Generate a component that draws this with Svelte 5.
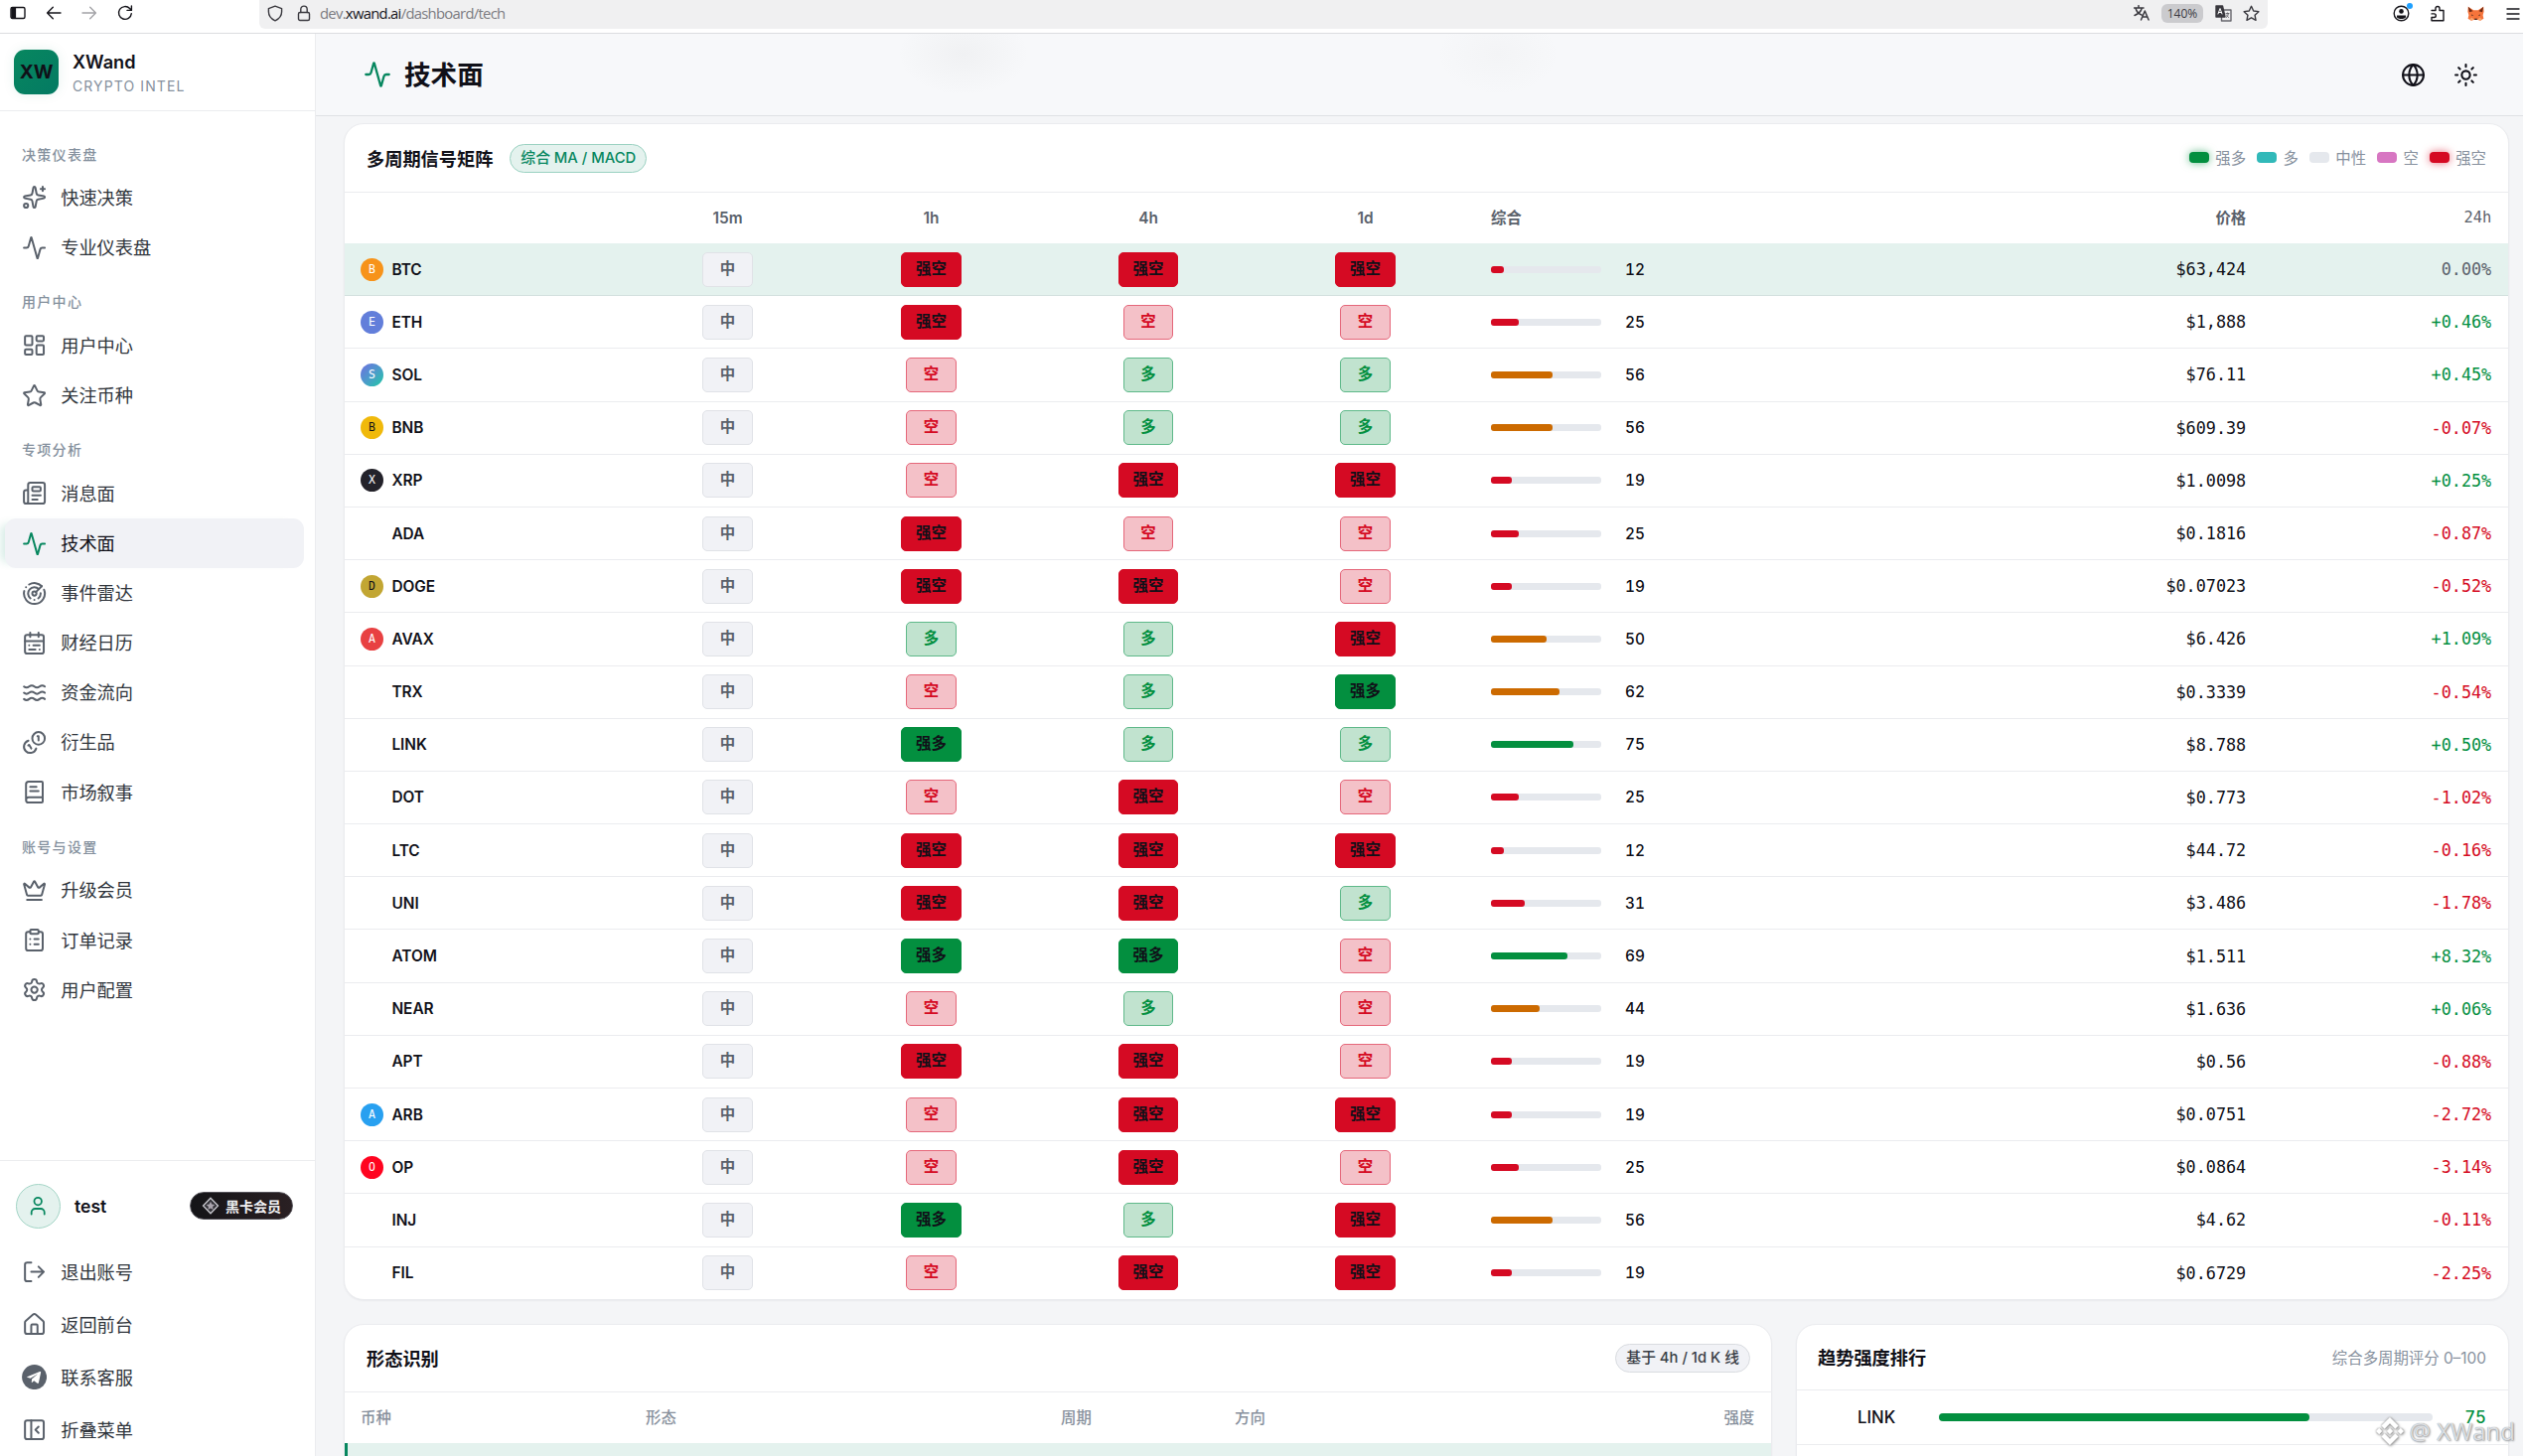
<script>
  // 24x24 stroke icons, drawn with currentColor
  const icons = {
    sparkles: '<path d="M11.017 2.814a1 1 0 0 1 1.966 0l1.051 5.558a2 2 0 0 0 1.594 1.594l5.558 1.051a1 1 0 0 1 0 1.966l-5.558 1.051a2 2 0 0 0-1.594 1.594l-1.051 5.558a1 1 0 0 1-1.966 0l-1.051-5.558a2 2 0 0 0-1.594-1.594l-5.558-1.051a1 1 0 0 1 0-1.966l5.558-1.051a2 2 0 0 0 1.594-1.594z"/><path d="M20 2v4M22 4h-4"/><circle cx="4" cy="20" r="2"/>',
    activity: '<path d="M22 12h-2.48a2 2 0 0 0-1.93 1.46l-2.35 8.36a.25.25 0 0 1-.48 0L9.24 2.18a.25.25 0 0 0-.48 0l-2.35 8.36A2 2 0 0 1 4.49 12H2"/>',
    dashboard: '<rect width="7" height="9" x="3" y="3" rx="1"/><rect width="7" height="5" x="14" y="3" rx="1"/><rect width="7" height="9" x="14" y="12" rx="1"/><rect width="7" height="5" x="3" y="16" rx="1"/>',
    star: '<path d="M11.525 2.295a.53.53 0 0 1 .95 0l2.31 4.679a2.123 2.123 0 0 0 1.595 1.16l5.166.756a.53.53 0 0 1 .294.904l-3.736 3.638a2.123 2.123 0 0 0-.611 1.878l.882 5.14a.53.53 0 0 1-.771.56l-4.618-2.428a2.122 2.122 0 0 0-1.973 0L6.396 21.01a.53.53 0 0 1-.77-.56l.881-5.139a2.122 2.122 0 0 0-.611-1.879L2.16 9.795a.53.53 0 0 1 .294-.906l5.165-.755a2.122 2.122 0 0 0 1.597-1.16z"/>',
    newspaper: '<path d="M15 18h-5M18 14h-8M4 22h16a2 2 0 0 0 2-2V4a2 2 0 0 0-2-2H8a2 2 0 0 0-2 2v16a2 2 0 0 1-4 0v-9a2 2 0 0 1 2-2h2"/><rect width="8" height="4" x="10" y="6" rx="1"/>',
    radar: '<path d="M19.07 4.93A10 10 0 0 0 6.99 3.34M4 6h.01M2.29 9.62A10 10 0 1 0 21.31 8.35M16.24 7.76A6 6 0 1 0 8.23 16.67M12 18h.01M17.99 11.66A6 6 0 0 1 15.77 16.67"/><circle cx="12" cy="12" r="2"/><path d="m13.41 10.59 5.66-5.66"/>',
    calendar: '<rect width="18" height="18" x="3" y="4" rx="2"/><path d="M16 2v4M3 10h18M8 2v4M17 14h-6M13 18H7M7 14h.01M17 18h.01"/>',
    waves: '<path d="M2 6c.6.5 1.2 1 2.5 1C7 7 7 5 9.5 5c2.6 0 2.4 2 5 2 2.5 0 2.5-2 5-2 1.3 0 1.9.5 2.5 1M2 12c.6.5 1.2 1 2.5 1 2.5 0 2.5-2 5-2 2.6 0 2.4 2 5 2 2.5 0 2.5-2 5-2 1.3 0 1.9.5 2.5 1M2 18c.6.5 1.2 1 2.5 1 2.5 0 2.5-2 5-2 2.6 0 2.4 2 5 2 2.5 0 2.5-2 5-2 1.3 0 1.9.5 2.5 1"/>',
    coins: '<path d="M13.744 17.736a6 6 0 1 1-7.48-7.48M15 6h1v4M6.134 14.768l.866-.5 2 3.464"/><circle cx="16" cy="8" r="6"/>',
    book: '<path d="M4 19.5v-15A2.5 2.5 0 0 1 6.5 2H19a1 1 0 0 1 1 1v18a1 1 0 0 1-1 1H6.5a1 1 0 0 1 0-5H20M8 11h8M8 7h6"/>',
    crown: '<path d="M11.562 3.266a.5.5 0 0 1 .876 0L15.39 8.87a1 1 0 0 0 1.516.294L21.183 5.5a.5.5 0 0 1 .798.519l-2.834 10.246a1 1 0 0 1-.956.734H5.81a1 1 0 0 1-.957-.734L2.02 6.02a.5.5 0 0 1 .798-.519l4.276 3.664a1 1 0 0 0 1.516-.294zM5 21h14"/>',
    clipboard: '<rect width="8" height="4" x="8" y="2" rx="1"/><path d="M16 4h2a2 2 0 0 1 2 2v14a2 2 0 0 1-2 2H6a2 2 0 0 1-2-2V6a2 2 0 0 1 2-2h2M12 11h4M12 16h4M8 11h.01M8 16h.01"/>',
    settings: '<path d="M9.671 4.136a2.34 2.34 0 0 1 4.659 0 2.34 2.34 0 0 0 3.319 1.915 2.34 2.34 0 0 1 2.33 4.033 2.34 2.34 0 0 0 0 3.831 2.34 2.34 0 0 1-2.33 4.033 2.34 2.34 0 0 0-3.319 1.915 2.34 2.34 0 0 1-4.659 0 2.34 2.34 0 0 0-3.32-1.915 2.34 2.34 0 0 1-2.33-4.033 2.34 2.34 0 0 0 0-3.831A2.34 2.34 0 0 1 6.35 6.051a2.34 2.34 0 0 0 3.319-1.915"/><circle cx="12" cy="12" r="3"/>',
    logout: '<path d="m16 17 5-5-5-5M21 12H9M9 21H5a2 2 0 0 1-2-2V5a2 2 0 0 1 2-2h4"/>',
    house: '<path d="M15 21v-8a1 1 0 0 0-1-1h-4a1 1 0 0 0-1 1v8"/><path d="M3 10a2 2 0 0 1 .709-1.528l7-6a2 2 0 0 1 2.582 0l7 6A2 2 0 0 1 21 10v9a2 2 0 0 1-2 2H5a2 2 0 0 1-2-2z"/>',
    telegram: '<circle cx="12" cy="12" r="11.9" fill="currentColor" stroke="none"/><path d="M4.6 11.8 17.2 6.7c.7-.3 1.2.1 1 1l-2.1 9.6c-.2.8-.7.9-1.3.6l-3.2-2.4-1.6 1.5c-.4.3-.7.2-.7-.4l.3-2.7 5.8-5.2-7.2 4.5-3.1-1c-.7-.2-.7-.6-.5-.4z" fill="#fff" stroke="none"/>',
    panel: '<rect width="18" height="18" x="3" y="3" rx="2"/><path d="M9 3v18M16 15l-3-3 3-3"/>',
    user: '<path d="M19 21v-2a4 4 0 0 0-4-4H9a4 4 0 0 0-4 4v2"/><circle cx="12" cy="7" r="4"/>',
    globe: '<circle cx="12" cy="12" r="10"/><path d="M12 2a14.5 14.5 0 0 0 0 20 14.5 14.5 0 0 0 0-20M2 12h20"/>',
    sun: '<circle cx="12" cy="12" r="4"/><path d="M12 2v2M12 20v2m-7.07-17.07 1.41 1.41m11.32 11.32 1.41 1.41M2 12h2M20 12h2M6.34 17.66l-1.41 1.41M19.07 4.93l-1.41 1.41"/>',
  };

  const menu = [
    { title: '决策仪表盘', items: [['sparkles', '快速决策'], ['activity', '专业仪表盘']] },
    { title: '用户中心', items: [['dashboard', '用户中心'], ['star', '关注币种']] },
    {
      title: '专项分析',
      items: [
        ['newspaper', '消息面'],
        ['activity', '技术面'],
        ['radar', '事件雷达'],
        ['calendar', '财经日历'],
        ['waves', '资金流向'],
        ['coins', '衍生品'],
        ['book', '市场叙事'],
      ],
    },
    { title: '账号与设置', items: [['crown', '升级会员'], ['clipboard', '订单记录'], ['settings', '用户配置']] },
  ];

  const footer = [
    ['logout', '退出账号'],
    ['house', '返回前台'],
    ['telegram', '联系客服'],
    ['panel', '折叠菜单'],
  ];

  const active = '技术面';

  const legend = [
    ['strong-long', '强多'],
    ['long', '多'],
    ['neutral', '中性'],
    ['short', '空'],
    ['strong-short', '强空'],
  ];

  const signalClass = { 中: 'n', 强空: 'ss', 空: 's', 多: 'l', 强多: 'sl' };

  // symbol, 1h, 4h, 1d, score, price, change
  const rows = [
    ['BTC', '强空', '强空', '强空', 12, '$63,424', '0.00%'],
    ['ETH', '强空', '空', '空', 25, '$1,888', '+0.46%'],
    ['SOL', '空', '多', '多', 56, '$76.11', '+0.45%'],
    ['BNB', '空', '多', '多', 56, '$609.39', '-0.07%'],
    ['XRP', '空', '强空', '强空', 19, '$1.0098', '+0.25%'],
    ['ADA', '强空', '空', '空', 25, '$0.1816', '-0.87%'],
    ['DOGE', '强空', '强空', '空', 19, '$0.07023', '-0.52%'],
    ['AVAX', '多', '多', '强空', 50, '$6.426', '+1.09%'],
    ['TRX', '空', '多', '强多', 62, '$0.3339', '-0.54%'],
    ['LINK', '强多', '多', '多', 75, '$8.788', '+0.50%'],
    ['DOT', '空', '强空', '空', 25, '$0.773', '-1.02%'],
    ['LTC', '强空', '强空', '强空', 12, '$44.72', '-0.16%'],
    ['UNI', '强空', '强空', '多', 31, '$3.486', '-1.78%'],
    ['ATOM', '强多', '强多', '空', 69, '$1.511', '+8.32%'],
    ['NEAR', '空', '多', '空', 44, '$1.636', '+0.06%'],
    ['APT', '强空', '强空', '空', 19, '$0.56', '-0.88%'],
    ['ARB', '空', '强空', '强空', 19, '$0.0751', '-2.72%'],
    ['OP', '空', '强空', '空', 25, '$0.0864', '-3.14%'],
    ['INJ', '强多', '多', '强空', 56, '$4.62', '-0.11%'],
    ['FIL', '空', '强空', '强空', 19, '$0.6729', '-2.25%'],
  ];

  const coins = ['BTC', 'ETH', 'SOL', 'BNB', 'XRP', 'DOGE', 'AVAX', 'ARB', 'OP'];

  function scoreClass(score) {
    if (score >= 65) return 'high';
    return score >= 40 ? 'mid' : 'low';
  }

  function changeClass(change) {
    if (change[0] === '+') return 'up';
    return change[0] === '-' ? 'down' : 'flat';
  }
</script>

{#snippet icon(name)}
  <svg class="icon" viewBox="0 0 24 24">{@html icons[name]}</svg>
{/snippet}

<div class="window">
  <div class="browser">
    <div class="nav-buttons">
      <svg width="16" height="16" viewBox="0 0 16 16"><rect x="1" y="2.5" width="14" height="11" rx="1.5" /><path d="M2 3h3.4v10H2z" fill="#15141a" /></svg>
      <svg width="16" height="16" viewBox="0 0 16 16"><path d="M15 8H1.8M7.3 2.3 1.6 8l5.7 5.7" /></svg>
      <svg class="dim" width="16" height="16" viewBox="0 0 16 16"><path d="M1 8h13.2M8.7 2.3 14.4 8l-5.7 5.7" /></svg>
      <svg width="16" height="16" viewBox="0 0 16 16"><path d="M14.3 8.6A6.4 6.4 0 1 1 12.6 3.6l1.6 1.6M14.4 1v4.4H10" /></svg>
    </div>
    <div class="address">
      <svg width="16" height="17" viewBox="0 0 16 17"><path d="M8 1.2 14.6 3.6v3.2c0 4.3-2.7 7.3-6.6 9-3.9-1.7-6.6-4.7-6.6-9V3.6z" /></svg>
      <svg class="lock" width="14" height="17" viewBox="0 0 14 17"><rect x="1.5" y="7.5" width="11" height="8" rx="1.5" /><path d="M3.8 7.5V4.3a3.2 3.2 0 0 1 6.4 0v3.2" /></svg>
      <span class="url">dev.<b>xwand.ai</b>/dashboard/tech</span>
      <svg width="16" height="16" viewBox="0 0 16 16"><path d="M.5 3H10M5 .7V3M2 3c.8 3.6 3.4 6 6 7M8.3 3C7.5 6.6 4.5 9 1 10.5M7.5 15l3.800-9 3.800 9M8.800 12h5" stroke-width="1.5" /></svg>
      <span class="zoom">140%</span>
      <svg width="17" height="17" viewBox="0 0 17 17"><path d="M9 5h7v11H6.5v-4" stroke="#66656c" /><path d="M1 1h6.5L10 12H1z" fill="#3a393f" stroke="#3a393f" /><path d="m3 9 2-5.5L7 9M3.6 7.5h2.8" stroke="#fff" stroke-width="1" /><path d="M11 8.500h3M12.500 8v1M13.500 8.500c-.3 2-1 3-2.200 4M11.500 10c.5 1.300 1.300 2 2.200 2.500" stroke="#66656c" stroke-width=".9" /></svg>
      <svg width="17" height="17" viewBox="0 0 24 24"><path d="m12 1.800 3.100 6.700 7.300.9-5.400 5 1.400 7.300L12 18.100l-6.400 3.600L7 14.400l-5.400-5 7.300-.9z" stroke-width="2" /></svg>
    </div>
    <div class="tools">
      <span class="account">
        <svg width="17" height="17" viewBox="0 0 17 17"><circle cx="8.5" cy="8.5" r="7.3" /><circle cx="8.5" cy="6.4" r="2.3" fill="#15141a" stroke="none" /><path d="M4 12.500v-2h9v2c-2.500 2-6.500 2-9 0z" fill="#15141a" stroke="none" /></svg>
        <i></i>
      </span>
      <svg width="16" height="17" viewBox="0 0 16 17"><path d="M2 5.500h4V3.500a2 2 0 0 1 4 0v2h4v10.300H2v-3.300h2.500a1.800 1.800 0 0 0 0-3.600H2" /></svg>
      <svg width="17" height="16" viewBox="0 0 17 16"><path d="m.8.8 5.500 3.400h4.400L16.200.8l.4 5-1 3.400.8 3.500-3.200 2-2.600-.7h-4.200l-2.600.7-3.200-2 .8-3.500-1-3.400z" fill="#f5743b" stroke="none" /><path d="m.8.8 4.700 4.500L2 6.300zM16.200.8l-4.700 4.500 3.500 1z" fill="#6b2a14" stroke="none" /><path d="m4.200 8.400 2 1-1.900.4zM12.800 8.400l-2 1 1.900.4zM7 12.800h3l-.5 1.200h-2z" fill="#33221d" stroke="none" /><path d="m2 13.500 2.600-2 2 2.300-2.400.6zM15 13.500l-2.600-2-2 2.300 2.400.6z" fill="#f9a36b" stroke="none" /></svg>
      <svg class="burger" width="14" height="14" viewBox="0 0 14 14"><path d="M1 2h12M1 7h12M1 12h12" /></svg>
    </div>
  </div>

  <div class="app">
    <aside>
      <div class="brand">
        <div class="logo">XW</div>
        <div class="brand-text">
          <div class="name">XWand</div>
          <div class="tag">CRYPTO INTEL</div>
        </div>
      </div>
      <nav>
        {#each menu as group}
          <h4>{group.title}</h4>
          {#each group.items as [name, label]}
            <a class:active={label === active}>{@render icon(name)}{label}</a>
          {/each}
        {/each}
      </nav>
      <div class="side-foot">
        <div class="user">
          <span class="avatar">{@render icon('user')}</span>
          <span class="username">test</span>
          <span class="member">
            <svg width="18" height="18" viewBox="0 0 18 18"><path d="M9 1.300 16.500 9 9 16.700 1.500 9z" fill="#35343a" stroke="#c9c9cf" stroke-width="1.300" /><path d="m9 4.800 1.300 2.800 3 .4-2.200 2.100.5 3L9 11.600l-2.600 1.500.5-3L4.700 8l3-.4z" fill="#aaa4ad" /></svg>
            黑卡会员
          </span>
        </div>
        {#each footer as [name, label]}
          <a>{@render icon(name)}{label}</a>
        {/each}
      </div>
    </aside>

    <main>
      <header>
        {@render icon('activity')}
        <h1>技术面</h1>
        <div class="actions">
          {@render icon('globe')}
          {@render icon('sun')}
        </div>
      </header>

      <section class="card matrix">
        <div class="card-head">
          <h2>多周期信号矩阵</h2>
          <span class="pill green">综合 MA / MACD</span>
          <div class="legend">
            {#each legend as [kind, label]}
              <span><i class={kind}></i>{label}</span>
            {/each}
          </div>
        </div>
        <div class="row thead">
          <div></div>
          <div class="center">15m</div>
          <div class="center">1h</div>
          <div class="center">4h</div>
          <div class="center">1d</div>
          <div class="score cjk">综合</div>
          <div class="right cjk">价格</div>
          <div class="right mono">24h</div>
        </div>
        {#each rows as [symbol, h1, h4, d1, score, price, change], i}
          <div class="row" class:selected={i === 0}>
            <div class="symbol">
              <span class="coin {symbol.toLowerCase()}">{coins.includes(symbol) ? symbol[0] : ''}</span>
              {symbol}
            </div>
            {#each ['中', h1, h4, d1] as signal}
              <div class="center"><span class="signal {signalClass[signal]}">{signal}</span></div>
            {/each}
            <div class="score">
              <span class="track"><i class={scoreClass(score)} style="width: {score}%"></i></span>
              {score}
            </div>
            <div class="right mono">{price}</div>
            <div class="right mono {changeClass(change)}">{change}</div>
          </div>
        {/each}
      </section>

      <div class="bottom">
        <section class="card">
          <div class="card-head">
            <h2>形态识别</h2>
            <span class="pill grey">基于 4h / 1d K 线</span>
          </div>
          <div class="pattern-head">
            <div>币种</div>
            <div>形态</div>
            <div>周期</div>
            <div>方向</div>
            <div>强度</div>
          </div>
          <div class="pattern-row"></div>
        </section>
        <section class="card rank">
          <div class="card-head">
            <h2>趋势强度排行</h2>
            <span class="hint">综合多周期评分 0–100</span>
          </div>
          <div class="rank-row">
            <span class="rank-name">LINK</span>
            <span class="rank-track"><i style="width: 75%"></i></span>
            <b>75</b>
          </div>
        </section>
      </div>
    </main>
  </div>

  <div class="watermark">
    <svg width="28" height="28" viewBox="0 0 24 24"><path d="M16.624 13.92l2.7175 2.7154-7.353 7.353-7.353-7.352 2.7175-2.7164 4.6355 4.6595 4.6356-4.6595zm4.6366-4.6366L24 12l-2.7154 2.7164L18.5682 12l2.6924-2.7164zm-9.272.001l2.7163 2.6914-2.7164 2.7174L9.2721 12l2.7164-2.7154zm-9.2722-.001L5.4088 12l-2.6914 2.6924L0 12l2.7164-2.7164zM11.9885.0115l7.353 7.329-2.7174 2.7154-4.6356-4.6356-4.6355 4.6595-2.7174-2.7154 7.353-7.353z" /></svg>
    @ XWand
  </div>
</div>

<style>
  :global(body) {
    overflow: hidden;
  }

  .window {
    position: relative;
    display: flex;
    flex-direction: column;
    width: 2540px;
    height: 1466px;
    overflow: hidden;
    background: #f4f5f7;
    color: #101018;
    font-family: Inter, 'Noto Sans CJK SC', sans-serif;
    font-size: 15.4px;
  }

  .window * {
    box-sizing: border-box;
  }

  h1,
  h2,
  h4 {
    margin: 0;
  }

  .icon {
    flex: none;
    width: 25.2px;
    height: 25.2px;
    fill: none;
    stroke: currentColor;
    stroke-width: 1.9;
    stroke-linecap: round;
    stroke-linejoin: round;
  }

  /* browser toolbar */
  .browser {
    flex: none;
    display: flex;
    align-items: flex-start;
    height: 34px;
    background: #fff;
    border-bottom: 1px solid #dcdde0;
  }

  .browser svg {
    flex: none;
    fill: none;
    stroke: #15141a;
    stroke-width: 1.4;
    stroke-linecap: round;
    stroke-linejoin: round;
  }

  .nav-buttons {
    display: flex;
    gap: 20px;
    width: 261px;
    padding: 5px 0 0 10px;
  }

  .nav-buttons .dim {
    stroke: #a3a3a7;
  }

  .address {
    display: flex;
    align-items: center;
    width: 2022px;
    height: 29px;
    padding: 0 8px 3px;
    background: #f0f0f1;
    border-radius: 0 0 6px 6px;
  }

  .address .lock {
    margin-left: 14px;
  }

  .address svg {
    stroke: #3a393f;
  }

  .url {
    flex: 1;
    margin-left: 9px;
    color: #7c7c82;
    font-family: 'Open Sans', 'Noto Sans', sans-serif;
    font-size: 14.8px;
    letter-spacing: -0.7px;
  }

  .url b {
    color: #15141a;
    font-weight: 400;
  }

  .zoom {
    width: 42px;
    height: 19px;
    margin: 0 12px;
    border-radius: 6px;
    background: #cbcbce;
    color: #3a393f;
    font: 12px/19px 'Open Sans', sans-serif;
    text-align: center;
  }

  .address .zoom + svg {
    margin-right: 11px;
  }

  .tools {
    flex: 1;
    display: flex;
    align-items: center;
    justify-content: flex-end;
    gap: 22px;
    padding: 5px 3px 0 0;
  }

  .account {
    position: relative;
    height: 17px;
    margin-right: -2px;
  }

  .account i {
    position: absolute;
    top: -2px;
    right: -3px;
    width: 6px;
    height: 6px;
    border-radius: 50%;
    background: #1ea0ff;
  }

  /* sidebar */
  .app {
    flex: 1;
    display: flex;
    min-height: 0;
  }

  aside {
    flex: none;
    display: flex;
    flex-direction: column;
    width: 318px;
    background: #fff;
    border-right: 1px solid #ebecef;
  }

  .brand {
    display: flex;
    align-items: center;
    gap: 14px;
    height: 78px;
    padding: 0 14px 1px;
    border-bottom: 1px solid #ebecef;
  }

  .logo {
    width: 45px;
    height: 45px;
    border-radius: 11px;
    background: linear-gradient(135deg, #07875f, #047a63);
    box-shadow: 0 0 12px rgba(5, 130, 100, 0.1);
    font-size: 19px;
    font-weight: 700;
    line-height: 45px;
    text-align: center;
  }

  .brand-text {
    padding-top: 5px;
  }

  .name {
    font-size: 18.2px;
    font-weight: 600;
    line-height: 24px;
  }

  .tag {
    color: #86919e;
    font-size: 14px;
    letter-spacing: 1.1px;
    line-height: 26px;
  }

  nav {
    flex: 1;
    padding-top: 25px;
  }

  h4 {
    height: 37px;
    padding: 9px 22px 0;
    color: #84909d;
    font-size: 14px;
    font-weight: 500;
    line-height: 20px;
    letter-spacing: 1.3px;
  }

  a + h4 {
    height: 48.8px;
    padding-top: 20px;
  }

  a {
    display: flex;
    align-items: center;
    gap: 14px;
    height: 50.1px;
    padding: 0 0 2px 22px;
    color: #30353c;
    font-size: 18.2px;
  }

  a .icon {
    margin-top: 2px;
    color: #5a616b;
  }

  a.active {
    margin: 0 11px 0 5px;
    padding-left: 17px;
    border-radius: 11px;
    background: #f1f2f6;
    box-shadow: -10px 0 9px -6px rgba(5, 135, 100, 0.16);
    color: #101018;
  }

  a.active .icon,
  header > .icon {
    color: #07875f;
  }

  .side-foot {
    height: 298px;
    border-top: 1px solid #ebecef;
  }

  .side-foot a {
    height: 53px;
  }

  .user {
    display: flex;
    align-items: center;
    height: 85px;
    padding: 5px 22px 0 16px;
  }

  .avatar {
    display: grid;
    place-items: center;
    width: 45px;
    height: 45px;
    border: 1px solid #a3d5c6;
    border-radius: 50%;
    background: #e4f2ee;
    color: #07875f;
  }

  .avatar .icon {
    width: 22.4px;
    height: 22.4px;
  }

  .username {
    flex: 1;
    margin-left: 14px;
    font-size: 17.6px;
    font-weight: 600;
  }

  .member {
    display: flex;
    align-items: center;
    gap: 6px;
    height: 28px;
    padding: 0 11px;
    border: 1px solid #55535a;
    border-radius: 14px;
    background: linear-gradient(90deg, #141417, #2a2023);
    color: #f1f1f3;
    font-size: 14px;
    font-weight: 600;
  }

  /* main area */
  main {
    flex: 1;
    display: flex;
    flex-direction: column;
  }

  header {
    flex: none;
    display: flex;
    align-items: center;
    height: 83px;
    padding: 0 45px 0 48px;
    border-bottom: 1px solid #dfe1e5;
    background:
      radial-gradient(ellipse 66px 42px at 652px 20px, rgba(120, 120, 120, 0.055), transparent),
      radial-gradient(ellipse 62px 42px at 1190px 20px, rgba(120, 120, 120, 0.03), transparent),
      #f7f8fa;
  }

  header > .icon {
    width: 28px;
    height: 28px;
    stroke-width: 2;
  }

  h1 {
    margin-left: 13px;
    padding-bottom: 3px;
    font-size: 26.6px;
    font-weight: 700;
  }

  .actions {
    display: flex;
    gap: 28px;
    margin-left: auto;
  }

  .actions .icon {
    width: 25px;
    height: 25px;
    stroke-width: 2;
  }

  .card {
    overflow: hidden;
    border: 1px solid #ebecef;
    border-radius: 20px;
    background: #fff;
    box-shadow: 0 1px 2px rgba(20, 20, 40, 0.05);
  }

  .matrix {
    flex: none;
    width: 2180px;
    height: 1185px;
    margin: 7px 0 0 28px;
  }

  .card-head {
    display: flex;
    align-items: center;
    height: 68px;
    padding: 0 21px 0 22px;
    border-bottom: 1px solid #ebecef;
  }

  .matrix .card-head {
    height: 69px;
    padding-right: 22px;
  }

  h2 {
    padding-bottom: 1px;
    font-size: 18.2px;
    font-weight: 700;
  }

  .pill {
    height: 29px;
    padding: 0 10px;
    border: 1px solid;
    border-radius: 15px;
    font-size: 14.8px;
    font-weight: 500;
    line-height: 26px;
  }

  .pill.green {
    margin-left: 17px;
    border-color: #9bd2c2;
    background: #e4f2ee;
    color: #07875f;
  }

  .pill.grey {
    margin-left: auto;
    border-color: #d9dce0;
    background: #f1f2f6;
    color: #3a3f46;
  }

  .legend {
    display: flex;
    gap: 11.2px;
    margin-left: auto;
    padding-bottom: 2px;
    color: #87919e;
  }

  .legend span {
    display: flex;
    align-items: center;
    gap: 6.6px;
  }

  .legend i {
    width: 19.6px;
    height: 11px;
    margin-top: 1px;
    border-radius: 4px;
  }

  .legend .strong-long {
    background: #038f3f;
    box-shadow: 0 0 8px rgba(3, 143, 63, 0.6);
  }

  .legend .long {
    background: #31b9b9;
  }

  .legend .neutral {
    background: #e5e8ed;
  }

  .legend .short {
    background: #d776c2;
  }

  .legend .strong-short {
    background: #d50a23;
    box-shadow: 0 0 8px rgba(213, 10, 35, 0.6);
  }

  .row {
    display: grid;
    grid-template-columns: 290px 191px 219px 218px 219px 300px 494px 247px;
    align-items: center;
    height: 53.2px;
    border-bottom: 1px solid #ebecef;
  }

  .thead {
    height: 51px;
    padding-bottom: 1px;
    border-bottom: 0;
    color: #5a616b;
    font-weight: 600;
  }

  .thead .cjk {
    padding-bottom: 2px;
  }

  .selected {
    background: #e4f2ee;
    border-color: #d3e0de;
  }

  .center {
    text-align: center;
  }

  .right {
    padding-right: 16.8px;
    text-align: right;
  }

  .mono {
    font-family: 'DejaVu Sans Mono', monospace;
    font-size: 16.8px;
  }

  .thead .mono {
    font-size: 15.4px;
    font-weight: 400;
  }

  .symbol {
    display: flex;
    align-items: center;
    gap: 8.4px;
    padding-left: 16px;
    font-weight: 600;
  }

  .coin {
    width: 23px;
    height: 23px;
    border-radius: 50%;
    color: #fff;
    font: 11.5px/23px 'DejaVu Sans Mono', monospace;
    text-align: center;
  }

  .btc { background: #f7931a; }
  .eth { background: #627eda; }
  .sol { background: linear-gradient(135deg, #6f6ee0, #4d9bcb 50%, #1fc8a5); }
  .bnb { background: #f0b90b; color: #101018; }
  .xrp { background: #23222a; }
  .doge { background: #c2a633; color: #101018; }
  .avax { background: #e84142; }
  .arb { background: #28a0f0; }
  .op { background: #ff0420; }

  .signal {
    display: inline-block;
    height: 35px;
    padding: 0 16.4px;
    border: 1px solid;
    border-radius: 5px;
    font-weight: 600;
    line-height: 32px;
    vertical-align: middle;
  }

  .signal.n {
    padding: 0 17px;
    border-color: #e0e2e7;
    background: #f1f2f6;
    color: #5a616b;
  }

  .signal.s {
    border-color: #e5677a;
    background: #f4c1c8;
    color: #d50a23;
  }

  .signal.l {
    border-color: #5fb98a;
    background: #c1e3cf;
    color: #038f3f;
  }

  .signal.ss,
  .signal.sl {
    padding: 0 14px;
    color: #101018;
  }

  .signal.ss {
    border-color: #d50a23;
    background: #d50a23;
  }

  .signal.sl {
    border-color: #038f3f;
    background: #038f3f;
  }

  .score {
    display: flex;
    align-items: center;
    padding-left: 17px;
    font-variant-numeric: tabular-nums;
  }

  .row:not(.thead) .score {
    font-weight: 500;
  }

  .track {
    width: 111px;
    height: 7px;
    margin-right: 24px;
    border-radius: 3px;
    background: #e5e8ed;
  }

  .track i {
    display: block;
    height: 7px;
    border-radius: 3px;
  }

  .low { background: #d50a23; }
  .mid { background: #cc6a00; }
  .high { background: #038f3f; }

  .up { color: #038f3f; }
  .down { color: #d50a23; }
  .flat { color: #5a616b; }

  .bottom {
    flex: none;
    display: grid;
    grid-template-columns: 1438px 718px;
    gap: 24px;
    height: 300px;
    margin: 24px 0 0 28px;
  }

  .pattern-head {
    display: grid;
    grid-template-columns: 287px 418px 175px 1fr auto;
    align-items: center;
    height: 51px;
    padding: 0 16.8px 3px 16px;
    color: #87909c;
    font-weight: 500;
  }

  .pattern-row {
    height: 60px;
    border-left: 3px solid #07875f;
    background: #e4f2ee;
  }

  .rank .card-head {
    height: 66px;
    padding: 0 22px 0 21px;
  }

  .hint {
    margin-left: auto;
    padding-bottom: 2px;
    color: #87919e;
  }

  .rank-row {
    display: flex;
    align-items: center;
    height: 55px;
    padding: 0 22px 0 61px;
    border-bottom: 1px solid #ebecef;
    font-size: 16.8px;
    font-weight: 500;
  }

  .rank-name {
    width: 82px;
  }

  .rank-track {
    width: 497px;
    height: 8px;
    border-radius: 4px;
    background: #e5e8ed;
  }

  .rank-track i {
    display: block;
    height: 8px;
    border-radius: 4px;
    background: #038f3f;
  }

  .rank-row b {
    margin-left: auto;
    color: #038f3f;
    font-weight: 500;
    font-variant-numeric: tabular-nums;
  }

  .watermark {
    position: absolute;
    right: 8px;
    bottom: 10px;
    display: flex;
    align-items: center;
    gap: 5px;
    color: rgba(236, 238, 241, 0.85);
    font-family: 'Open Sans', sans-serif;
    font-size: 24px;
    line-height: 30px;
    text-shadow: 0 0 1px #7d8186, 1px 1px 2px #95989d;
  }

  .watermark svg {
    fill: #fff;
    filter: drop-shadow(0 0 1px #888) drop-shadow(1px 1px 1px #aaa);
  }
</style>
